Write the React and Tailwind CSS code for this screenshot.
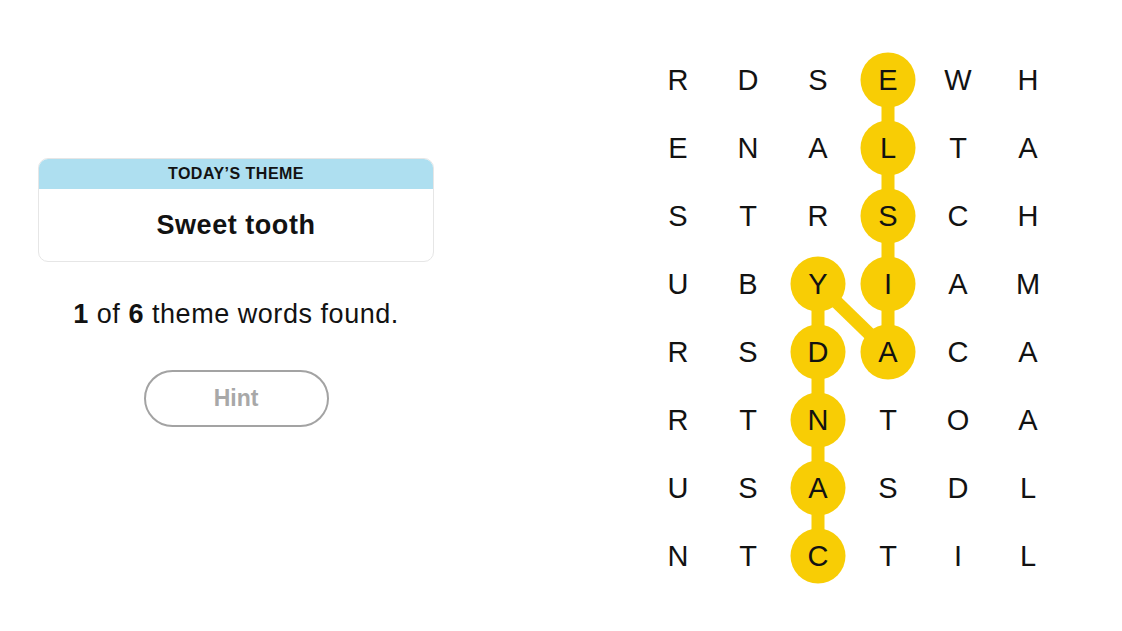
const GRID = [
  "RDSEWH",
  "ENALTA",
  "STRSCH",
  "UBYIAM",
  "RSDACA",
  "RTNTOA",
  "USASDL",
  "NTCTIL",
];

const FOUND = new Set(["0-3", "1-3", "2-3", "3-3", "4-3", "3-2", "4-2", "5-2", "6-2", "7-2"]);

const cx = (c) => 35 + 70 * c;
const cy = (r) => 34 + 68 * r;

function Board() {
  return (
    <div className="relative">
      <svg className="absolute inset-0" width="420" height="544" viewBox="0 0 420 544">
        <g stroke="#f8cd05" strokeWidth="13" strokeLinecap="round">
          <line x1={cx(3)} y1={cy(0)} x2={cx(3)} y2={cy(4)} />
          <line x1={cx(2)} y1={cy(3)} x2={cx(2)} y2={cy(7)} />
          <line x1={cx(2)} y1={cy(3)} x2={cx(3)} y2={cy(4)} />
        </g>
        {[...FOUND].map((k) => {
          const [r, c] = k.split("-").map(Number);
          return <circle key={k} cx={cx(c)} cy={cy(r)} r="27.5" fill="#f8cd05" />;
        })}
      </svg>
      <div className="relative grid grid-cols-[repeat(6,70px)] auto-rows-[68px]">
        {GRID.map((row, r) =>
          row.split("").map((ch, c) => (
            <div
              key={`${r}-${c}`}
              className="flex items-center justify-center text-[29px] leading-none text-[#121212]"
            >
              {ch}
            </div>
          ))
        )}
      </div>
    </div>
  );
}

export default function App() {
  return (
    <div
      className="flex h-[631px] w-[1122px] bg-white text-[#121212]"
      style={{ fontFamily: '"Liberation Sans", Arial, sans-serif' }}
    >
      <div className="ml-[38px] w-[396px] pt-[158px] flex flex-col items-center">
        <div className="w-full rounded-[10px] border border-[#e6e6e6] overflow-hidden">
          <div className="h-[30px] bg-[#aedff0] flex items-center justify-center text-[16px] font-bold tracking-[0.03em]">
            TODAY’S THEME
          </div>
          <div className="h-[72px] flex items-center justify-center text-[27px] font-bold tracking-[0.02em]">
            Sweet tooth
          </div>
        </div>
        <p className="mt-[37px] text-[27px] leading-[30px] tracking-[0.02em]">
          <b>1</b> of <b>6</b> theme words found.
        </p>
        <button className="mt-[41px] w-[185px] h-[57px] rounded-full border-2 border-[#a3a3a3] text-[23px] font-bold text-[#a8a8a8] bg-white">
          Hint
        </button>
      </div>
      <div className="ml-auto mr-[59px] pt-[46px]">
        <Board />
      </div>
    </div>
  );
}
